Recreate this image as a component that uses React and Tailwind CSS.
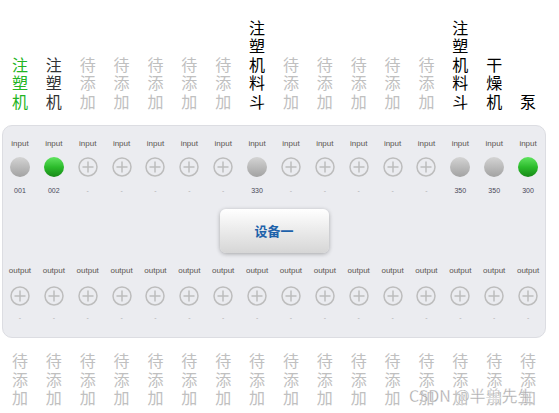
const GRAY = "text-[#c0c0c0]";

const top = [
  { t: "注塑机", c: "text-[#22b422]" },
  { t: "注塑机", c: "text-[#333333]" },
  { t: "待添加", c: GRAY },
  { t: "待添加", c: GRAY },
  { t: "待添加", c: GRAY },
  { t: "待添加", c: GRAY },
  { t: "待添加", c: GRAY },
  { t: "注塑机料斗", c: "text-black" },
  { t: "待添加", c: GRAY },
  { t: "待添加", c: GRAY },
  { t: "待添加", c: GRAY },
  { t: "待添加", c: GRAY },
  { t: "待添加", c: GRAY },
  { t: "注塑机料斗", c: "text-black" },
  { t: "干燥机", c: "text-black" },
  { t: "泵", c: "text-black" },
];

// kind: g = gray dot, on = green dot, add = empty slot
const inputs = [
  { k: "g", v: "001" },
  { k: "on", v: "002" },
  { k: "add" }, { k: "add" }, { k: "add" }, { k: "add" }, { k: "add" },
  { k: "g", v: "330" },
  { k: "add" }, { k: "add" }, { k: "add" }, { k: "add" }, { k: "add" },
  { k: "g", v: "350" },
  { k: "g", v: "350" },
  { k: "on", v: "300" },
];

const cjk = "font-['Noto_Sans_CJK_SC','Noto_Sans',sans-serif]";
const latin = "font-['Liberation_Sans','Noto_Sans',sans-serif]";

function VText({ text, className }) {
  return (
    <div className={`flex flex-col items-center text-[16px] leading-[18.5px] ${cjk} ${className}`}>
      {text.split("").map((ch, i) => (
        <span key={i}>{ch}</span>
      ))}
    </div>
  );
}

function Dot({ kind }) {
  if (kind === "g")
    return <div className="w-5 h-5 rounded-full bg-gradient-to-b from-[#d4d4d4] to-[#a2a2a2]" />;
  if (kind === "on")
    return <div className="w-5 h-5 rounded-full bg-gradient-to-b from-[#5fe45f] via-[#2cbc2c] to-[#178a17]" />;
  return (
    <svg width="20" height="20" viewBox="0 0 20 20" fill="none" stroke="#bdbdbd" strokeWidth="1.5">
      <circle cx="10" cy="10" r="9" />
      <path d="M10 4.5v11M4.5 10h11" />
    </svg>
  );
}

function Slot({ label, kind, value, gapTop, gapBottom }) {
  return (
    <div className="flex flex-col items-center">
      <div className={`text-[8px] leading-[10px] text-[#5a5550] ${latin}`}>{label}</div>
      <div className={gapTop}>
        <Dot kind={kind} />
      </div>
      <div className={`${gapBottom} text-[7px] leading-[10px] ${latin} ${value ? "text-[#4a4a58]" : "text-[#b0b0b0]"}`}>
        {value || "-"}
      </div>
    </div>
  );
}

export default function App() {
  return (
    <div className="relative w-[559px] h-[413px] bg-white overflow-hidden">
      <div className="ml-[2px] w-[544px]">
        {/* top labels */}
        <div className="h-[110px] px-[1px] grid grid-cols-[repeat(16,minmax(0,1fr))] items-end">
          {top.map((c, i) => (
            <VText key={i} text={c.t} className={c.c} />
          ))}
        </div>

        {/* device panel */}
        <div className="mt-[15px] border border-[#dcdde2] rounded-[10px] bg-[#ebecf0] pt-[13px] pb-[14px]">
          <div className="grid grid-cols-[repeat(16,minmax(0,1fr))]">
            {inputs.map((s, i) => (
              <Slot key={i} label="input" kind={s.k} value={s.v} gapTop="mt-[8px]" gapBottom="mt-[9px]" />
            ))}
          </div>
          <div className="mt-[13px] flex justify-center">
            <button
              className={`w-[109px] h-[44px] rounded-[6px] bg-gradient-to-b from-white to-[#d6d6d6] shadow-[0_1px_4px_rgba(0,0,0,0.3)] text-[13px] font-bold text-[#1e62aa] ${cjk}`}
            >
              设备一
            </button>
          </div>
          <div className="mt-[13px] grid grid-cols-[repeat(16,minmax(0,1fr))]">
            {inputs.map((_, i) => (
              <Slot key={i} label="output" kind="add" gapTop="mt-[10px]" gapBottom="mt-[7px]" />
            ))}
          </div>
        </div>

        {/* bottom labels */}
        <div className="mt-[13px] px-[1px] grid grid-cols-[repeat(16,minmax(0,1fr))]">
          {top.map((_, i) => (
            <VText key={i} text="待添加" className={GRAY} />
          ))}
        </div>
      </div>

      {/* watermark */}
      <div
        className={`absolute left-[409px] top-[385px] text-[16px] leading-[20px] text-[#a8a8a8] ${cjk} [-webkit-text-stroke:0.3px_#ffffff]`}
      >
        CSDN @半兽先生
      </div>
    </div>
  );
}
